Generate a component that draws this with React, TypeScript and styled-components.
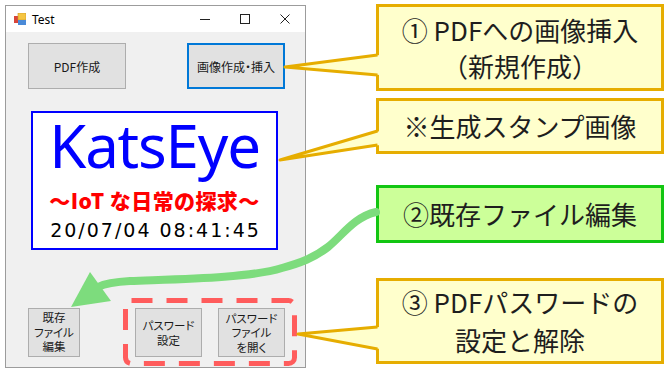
import React, { FC } from 'react';
import styled, { createGlobalStyle } from 'styled-components';

const GlobalStyle = createGlobalStyle`
  html, body {
    margin: 0;
    padding: 0;
    background: #ffffff;
  }
  body {
    font-family: "Noto Sans CJK JP", "Noto Sans", sans-serif;
  }
`;

const SPage = styled.div`
  position: relative;
  width: 672px;
  height: 372px;
  display: flex;
  align-items: flex-start;
  overflow: hidden;
`;

/* ---------- window ---------- */

const SWindow = styled.div`
  margin: 5px 0 0 5px;
  width: 301px;
  height: 363px;
  box-sizing: border-box;
  border: 1px solid #9c9c9c;
  display: flex;
  flex-direction: column;
  background: #f0f0f0;
`;

const STitleBar = styled.div`
  height: 26px;
  background: #ffffff;
  display: flex;
  align-items: center;
  padding-left: 8px;
`;

const STitleText = styled.span`
  margin-left: 6px;
  font-family: "Noto Sans", "Liberation Sans", sans-serif;
  font-size: 12px;
  color: #000;
  flex: 1;
`;

const SCaptionButton = styled.div`
  width: 40px;
  height: 26px;
  display: flex;
  align-items: center;
  justify-content: center;
`;

const SClient = styled.div`
  flex: 1;
  display: flex;
  flex-direction: column;
  padding: 11px 20px 0 22px;
`;

const STopRow = styled.div`
  display: flex;
  justify-content: space-between;
`;

const SButton = styled.div<{ $w: number; $h: number; $focused?: boolean }>(
  ({ $w, $h, $focused }) => `
  width: ${$w}px;
  height: ${$h}px;
  box-sizing: border-box;
  background: #e1e1e1;
  border: ${$focused ? '2px solid #0078d7' : '1px solid #adadad'};
  display: flex;
  flex-direction: column;
  align-items: center;
  justify-content: center;
  text-align: center;
  font-size: 12px;
  color: #1a1a1a;
  font-feature-settings: "palt";
  white-space: nowrap;
`
);

const SButtonLine = styled.span`
  display: block;
  font-size: 11.5px;
  line-height: 14.5px;
`;

const SStamp = styled.div`
  margin: 22px 0 0 3px;
  width: 247px;
  height: 139px;
  box-sizing: border-box;
  border: 2px solid #0000ff;
  background: #ffffff;
  display: flex;
  flex-direction: column;
  align-items: center;
  padding-top: 2px;
`;

const SLogo = styled.div`
  font-family: "Noto Sans", "Open Sans", sans-serif;
  font-size: 60px;
  line-height: 60px;
  color: #0000ff;
  letter-spacing: -1.2px;
`;

const SMotto = styled.div`
  margin-top: 10px;
  font-size: 21px;
  line-height: 30px;
  font-weight: 900;
  color: #ff0000;
  white-space: nowrap;
  letter-spacing: 0.4px;
`;

const SStampDate = styled.div`
  font-family: "DejaVu Sans", "Noto Sans", sans-serif;
  font-size: 19px;
  line-height: 30px;
  color: #000;
  letter-spacing: 2px;
  margin-right: -2px;
`;

const SBottomRow = styled.div`
  margin-top: 48px;
  display: flex;
  align-items: center;
  justify-content: space-between;
`;

const SPasswordGroup = styled.div`
  position: relative;
  margin-right: -12px;
  padding: 10px 12px 9px;
  display: flex;
  gap: 16px;
`;

const SDashOutline = styled.svg`
  position: absolute;
  left: 0;
  top: 0;
  pointer-events: none;
`;

/* ---------- callouts ---------- */

const SCallouts = styled.div`
  margin-left: 70px;
  width: 288px;
  display: flex;
  flex-direction: column;
`;

const SCallout = styled.div<{ $top: number; $h: number; $green?: boolean; $lh?: number }>(
  ({ $top, $h, $green, $lh }) => `
  margin-top: ${$top}px;
  height: ${$h}px;
  box-sizing: border-box;
  border: 3px solid ${$green ? '#12c612' : '#e6ad00'};
  background: ${$green ? '#ccff99' : '#ffffcc'};
  display: flex;
  flex-direction: column;
  align-items: center;
  justify-content: center;
  font-size: 26px;
  line-height: ${$lh ?? 36}px;
  color: #1e1e1e;
  white-space: nowrap;
`
);

const SOverlay = styled.svg`
  position: absolute;
  left: 0;
  top: 0;
  pointer-events: none;
`;

const AppIcon: FC = () => (
  <svg width="12" height="12" viewBox="0 0 12 12">
    <rect x="0" y="3" width="4" height="7" fill="#d8453a" />
    <rect x="4" y="0" width="8" height="7" fill="#f5c542" stroke="#c9962a" strokeWidth="0.6" />
    <rect x="4" y="7" width="8" height="5" fill="#4a8ad8" />
  </svg>
);

const gold = '#e6ad00';
const yellow = '#ffffcc';

const Tail: FC<{ tip: [number, number]; y1: number; y2: number }> = ({ tip, y1, y2 }) => (
  <g>
    <polygon points={`380,${y1} ${tip[0]},${tip[1]} 380,${y2}`} fill={yellow} />
    <polyline
      points={`377.5,${y1} ${tip[0]},${tip[1]} 377.5,${y2}`}
      fill="none"
      stroke={gold}
      strokeWidth="3"
      strokeLinejoin="round"
    />
  </g>
);

const lines = (...texts: string[]) => texts.map((t) => <SButtonLine key={t}>{t}</SButtonLine>);

const App: FC = () => {
  return (
    <>
      <GlobalStyle />
      <SPage>
        <SWindow>
          <STitleBar>
            <AppIcon />
            <STitleText>Test</STitleText>
            <SCaptionButton>
              <svg width="10" height="10" viewBox="0 0 10 10">
                <line x1="0" y1="5.5" x2="10" y2="5.5" stroke="#222" strokeWidth="1" />
              </svg>
            </SCaptionButton>
            <SCaptionButton>
              <svg width="10" height="10" viewBox="0 0 10 10">
                <rect x="0.5" y="0.5" width="9" height="9" fill="none" stroke="#222" strokeWidth="1" />
              </svg>
            </SCaptionButton>
            <SCaptionButton>
              <svg width="10" height="10" viewBox="0 0 10 10">
                <path d="M0.5 0.5 L9.5 9.5 M9.5 0.5 L0.5 9.5" stroke="#222" strokeWidth="1" />
              </svg>
            </SCaptionButton>
          </STitleBar>
          <SClient>
            <STopRow>
              <SButton $w={98} $h={46}>PDF作成</SButton>
              <SButton $w={98} $h={46} $focused>
                画像作成・挿入
              </SButton>
            </STopRow>
            <SStamp>
              <SLogo>KatsEye</SLogo>
              <SMotto>〜IoT な日常の探求〜</SMotto>
              <SStampDate>20/07/04 08:41:45</SStampDate>
            </SStamp>
            <SBottomRow>
              <SButton $w={52} $h={49}>
                {lines('既存', 'ファイル', '編集')}
              </SButton>
              <SPasswordGroup>
                <SDashOutline width="174" height="68">
                  <rect
                    x="2.5"
                    y="2.5"
                    width="169"
                    height="63"
                    rx="6"
                    fill="none"
                    stroke="#ff5c5c"
                    strokeWidth="5"
                    strokeDasharray="21 14"
                  />
                </SDashOutline>
                <SButton $w={67} $h={49}>
                  {lines('パスワード', '設定')}
                </SButton>
                <SButton $w={67} $h={49}>
                  {lines('パスワード', 'ファイル', 'を開く')}
                </SButton>
              </SPasswordGroup>
            </SBottomRow>
          </SClient>
        </SWindow>

        <SCallouts>
          <SCallout $top={4} $h={87}>
            <div>① PDFへの画像挿入</div>
            <div>（新規作成）</div>
          </SCallout>
          <SCallout $top={7} $h={56}>
            <div>※生成スタンプ画像</div>
          </SCallout>
          <SCallout $top={31} $h={58} $green>
            <div>②既存ファイル編集</div>
          </SCallout>
          <SCallout $top={35} $h={86} $lh={38}>
            <div>③ PDFパスワードの</div>
            <div>設定と解除</div>
          </SCallout>
        </SCallouts>

        <SOverlay width="672" height="372">
          <Tail tip={[285, 67]} y1={55} y2={75} />
          <Tail tip={[280, 160]} y1={131} y2={145} />
          <Tail tip={[298, 334]} y1={327} y2={349} />
          <path
            d="M376 212 C354 217 342 236 328 247 C314 258 300 263 282 268 C250 278 180 279 130 281 C112 282 104 284 98 287"
            fill="none"
            stroke="#7ddc7d"
            strokeWidth="8"
            strokeLinecap="round"
          />
          <polygon points="90,272 111,301 71,307" fill="#7ddc7d" />
        </SOverlay>
      </SPage>
    </>
  );
};

export default App;
